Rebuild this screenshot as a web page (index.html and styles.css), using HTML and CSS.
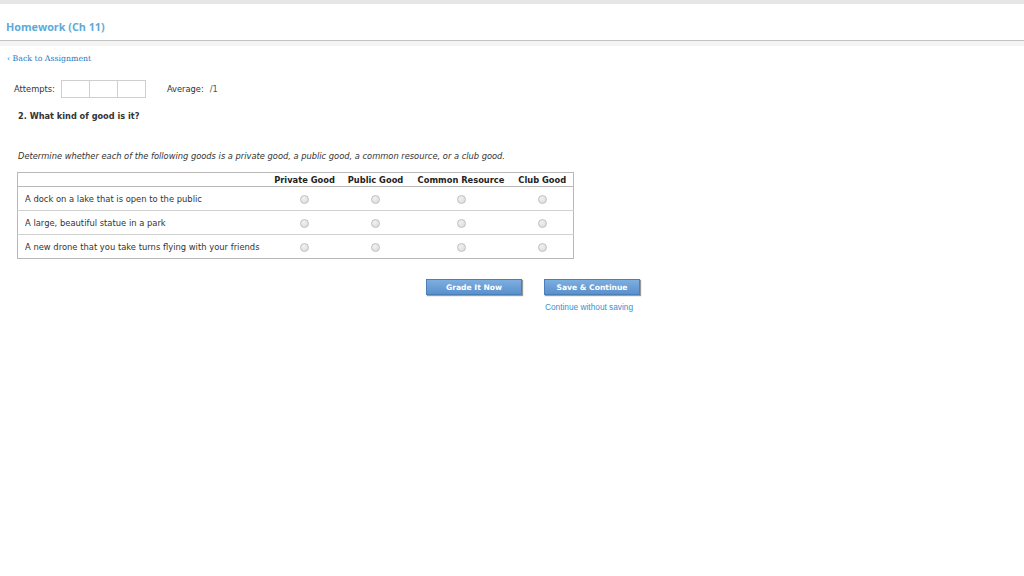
FILE: index.html
```html
<!DOCTYPE html>
<html>
<head>
<meta charset="utf-8">
<link rel="stylesheet" href="styles.css">
</head>
<body>
<div class="topbar"></div>
<header class="header"><h1 class="title">Homework (Ch 11)</h1></header>
<div class="band"></div>
<main class="content">
  <a class="back" href="#">&lsaquo; Back to Assignment</a>
  <div class="attempts">
    <span class="label">Attempts:</span>
    <div class="boxes"><span class="box"></span><span class="box"></span><span class="box"></span></div>
    <span class="label avg">Average:</span>
    <span class="score">/1</span>
  </div>
  <h2 class="question">2. What kind of good is it?</h2>
  <p class="instr">Determine whether each of the following goods is a private good, a public good, a common resource, or a club good.</p>
  <table class="grid">
    <colgroup>
      <col class="c0"><col class="c1"><col class="c2"><col class="c3"><col class="c4">
    </colgroup>
    <thead>
      <tr><th></th><th>Private Good</th><th>Public Good</th><th>Common Resource</th><th>Club Good</th></tr>
    </thead>
    <tbody>
      <tr><td class="item">A dock on a lake that is open to the public</td><td><span class="radio"></span></td><td><span class="radio"></span></td><td><span class="radio"></span></td><td><span class="radio"></span></td></tr>
      <tr><td class="item">A large, beautiful statue in a park</td><td><span class="radio"></span></td><td><span class="radio"></span></td><td><span class="radio"></span></td><td><span class="radio"></span></td></tr>
      <tr><td class="item">A new drone that you take turns flying with your friends</td><td><span class="radio"></span></td><td><span class="radio"></span></td><td><span class="radio"></span></td><td><span class="radio"></span></td></tr>
    </tbody>
  </table>
  <div class="actions">
    <div class="act"><button class="btn">Grade It Now</button></div>
    <div class="act"><button class="btn">Save &amp; Continue</button><a class="cont" href="#">Continue without saving</a></div>
  </div>
</main>
</body>
</html>
```
FILE: styles.css
```css
html, body { margin: 0; padding: 0; background: #fff; }
body { font-family: "DejaVu Sans", Verdana, sans-serif; color: #333; }
.topbar { height: 4px; background: #e6e6e6; }
.header { height: 36px; border-bottom: 1px solid #c2c2c2; display: flex; align-items: center; }
.title { margin: 9px 0 0 6px; font-family: "Open Sans", sans-serif; font-weight: 700; font-size: 10.8px; color: #5daad8; }
.band { height: 5px; background: #f4f4f4; }
.content { padding: 0 0 0 7px; }
.back { display: block; margin-top: 7px; font-family: "DejaVu Serif", serif; font-size: 7.8px; color: #1f7bc4; text-decoration: none; height: 12px; line-height: 12px; }
.attempts { display: flex; align-items: center; margin-top: 15px; padding-left: 7px; height: 18px; }
.label { font-size: 8.3px; color: #333; }
.boxes { display: flex; margin-left: 6px; border: 1px solid #cfcfcf; }
.box { width: 27px; height: 16px; border-left: 1px solid #cfcfcf; }
.box:first-child { border-left: none; }
.avg { margin-left: 21px; }
.score { font-size: 8.3px; color: #555; margin-left: 6px; }
.question { margin: 13px 0 0 11px; font-size: 8.2px; font-weight: 700; color: #333; }
.instr { margin: 30px 0 0 11px; font-size: 8.3px; font-style: italic; color: #333; }
.grid { margin: 11px 0 0 10px; border-collapse: collapse; width: 556px; table-layout: fixed; border: 1px solid #b8b8b8; }
.c0 { width: 251px; } .c1 { width: 72px; } .c2 { width: 70px; } .c3 { width: 101px; } .c4 { width: 62px; }
.grid th { font-size: 8.3px; font-weight: 700; color: #222; height: 13px; padding: 0; text-align: center; border-bottom: 1px solid #b8b8b8; white-space: nowrap; }
.grid td { height: 23px; padding: 0; text-align: center; border-top: 1px solid #d0d0d0; }
.grid td.item { text-align: left; padding-left: 7px; font-size: 8.4px; color: #333; white-space: nowrap; }
.radio { display: inline-block; width: 7px; height: 7px; border-radius: 50%; border: 1px solid #c4c4c4; background: radial-gradient(circle at 40% 35%, #f2f2f2, #d6d6d6); vertical-align: middle; }
.actions { display: flex; margin: 20px 0 0 419px; gap: 22px; }
.act { display: flex; flex-direction: column; align-items: flex-start; }
.btn { width: 96px; height: 16px; padding: 0; border: 1px solid #4a7fb8; background: linear-gradient(#7eaee0, #5b90cc); color: #fff; font-family: "DejaVu Sans", sans-serif; font-size: 7.6px; font-weight: 700; box-shadow: 1px 1px 1px #9a9a9a; }
.cont { margin: 7px 0 0 1px; font-family: "Liberation Sans", Arial, sans-serif; font-size: 8.3px; color: #3a8fd0; text-decoration: none; }
```
